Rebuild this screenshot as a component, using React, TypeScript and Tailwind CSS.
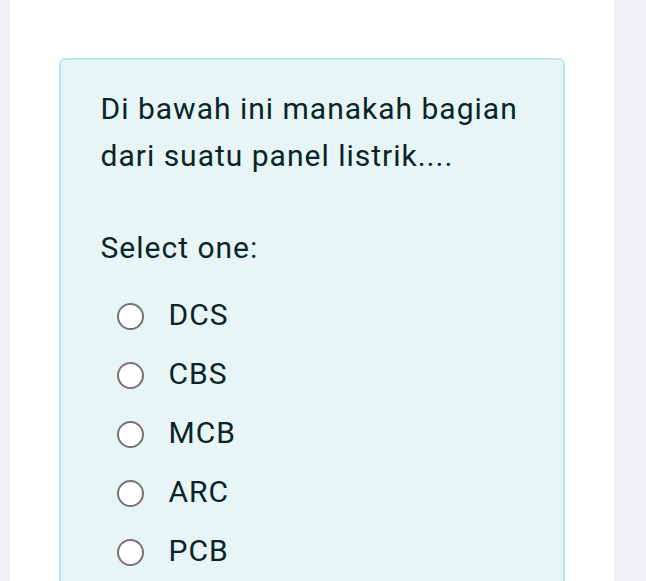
const options = ["DCS", "CBS", "MCB", "ARC", "PCB"];

const RadioOption = ({ label }: { label: string }) => {
    return (
        <label className="flex items-center h-[59.2px]">
            <span className="ml-[16px] mt-[4px] w-[27px] h-[27px] rounded-full border-2 border-[#737373] bg-white shrink-0" />
            <span className="ml-[25px]">{label}</span>
        </label>
    );
};

export default function App() {
    return (
        <div className="flex h-[581px] overflow-hidden bg-[#f1f1f6]" style={{ fontFamily: "Roboto, 'Noto Sans', sans-serif" }}>
            {/* Page panel */}
            <div className="ml-[10px] w-[604px] bg-white px-[49px] pt-[58px]">
                {/* Question box */}
                <div className="h-[600px] rounded-[6px] border-2 border-[#bce5ea] bg-[#e7f5f7] pl-[39.5px] pr-[30px] pt-[24.5px] text-[30px] leading-[47px] tracking-[1px] text-[#0b2428]">
                    <p>Di bawah ini manakah bagian dari suatu panel listrik....</p>
                    <p className="mt-[45px]">Select one:</p>
                    <div className="mt-[14px] flex flex-col">
                        {options.map((opt) => (
                            <RadioOption key={opt} label={opt} />
                        ))}
                    </div>
                </div>
            </div>
        </div>
    );
}
